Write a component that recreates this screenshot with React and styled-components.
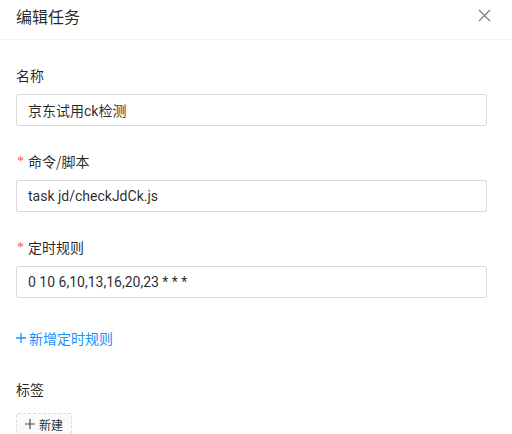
import styled, { createGlobalStyle } from "styled-components";

const GlobalStyle = createGlobalStyle`
  html, body {
    margin: 0;
    padding: 0;
    background: #fff;
  }
  body {
    font-family: Roboto, "Noto Sans CJK SC", sans-serif;
    font-size: 14px;
    color: rgba(0, 0, 0, 0.85);
  }
`;

const Drawer = styled.div`
  width: 512px;
  height: 434px;
  overflow: hidden;
  background: #fff;
`;

const Header = styled.div`
  display: flex;
  align-items: center;
  justify-content: space-between;
  height: 40px;
  padding: 0 21px 4px 16px;
  box-sizing: border-box;
  border-bottom: 1px solid #f0f0f0;
`;

const Title = styled.div`
  font-size: 16px;
  line-height: 22px;
  color: rgba(0, 0, 0, 0.85);
  font-family: "Noto Sans CJK SC", sans-serif;
  margin-top: -4px;
`;

const Close = styled.button`
  border: 0;
  background: none;
  padding: 0;
  width: 14px;
  height: 14px;
  display: flex;
  align-items: center;
  justify-content: center;
  margin-top: -4px;
  cursor: pointer;
`;

const Body = styled.div`
  padding: 24px 25px 0 16px;
`;

const Item = styled.div`
  margin-bottom: 24px;
`;

const Label = styled.div`
  display: flex;
  align-items: center;
  height: 22px;
  line-height: 22px;
  padding-bottom: 8px;
  font-family: "Noto Sans CJK SC", sans-serif;
  color: rgba(0, 0, 0, 0.85);
`;

const Star = styled.span`
  color: #ff4d4f;
  font-family: "Liberation Serif", serif;
  font-size: 14px;
  line-height: 1;
  margin: 0 4px 0 1px;
  position: relative;
  top: 1px;
`;

const Input = styled.input`
  display: block;
  width: 100%;
  height: 32px;
  box-sizing: border-box;
  padding: 4px 11px;
  border: 1px solid #d9d9d9;
  border-radius: 2px;
  font-family: Roboto, "Noto Sans CJK SC", sans-serif;
  font-size: 14px;
  color: rgba(0, 0, 0, 0.85);
  outline: none;
`;

const LinkButton = styled.button`
  display: flex;
  align-items: center;
  gap: 3px;
  height: 32px;
  padding: 0;
  border: 0;
  background: none;
  color: #1890ff;
  font-family: "Noto Sans CJK SC", sans-serif;
  font-size: 14px;
  cursor: pointer;
`;

const Control = styled.div`
  display: flex;
  align-items: center;
  min-height: 32px;
`;

const Tag = styled.span`
  display: inline-flex;
  align-items: center;
  gap: 4px;
  height: 22px;
  box-sizing: border-box;
  padding: 0 8px;
  border: 1px dashed #d9d9d9;
  border-radius: 2px;
  background: #fafafa;
  font-family: "Noto Sans CJK SC", sans-serif;
  font-size: 12px;
  color: rgba(0, 0, 0, 0.85);
`;

const Plus = ({ size, color, width = 1.2 }) => (
  <svg width={size} height={size} viewBox="0 0 10 10">
    <path d="M5 0V10M0 5H10" stroke={color} strokeWidth={width} fill="none" />
  </svg>
);

const fields = [
  { label: "名称", value: "京东试用ck检测" },
  { label: "命令/脚本", value: "task jd/checkJdCk.js", required: true },
  { label: "定时规则", value: "0 10 6,10,13,16,20,23 * * *", required: true },
];

export default function App() {
  return (
    <Drawer>
      <GlobalStyle />
      <Header>
        <Title>编辑任务</Title>
        <Close aria-label="close">
          <svg width="13" height="13" viewBox="0 0 13 13">
            <path d="M1 1L12 12M12 1L1 12" stroke="rgba(0,0,0,0.5)" strokeWidth="1.3" fill="none" />
          </svg>
        </Close>
      </Header>
      <Body>
        {fields.map((f) => (
          <Item key={f.label}>
            <Label>
              {f.required && <Star>*</Star>}
              {f.label}
            </Label>
            <Input defaultValue={f.value} />
          </Item>
        ))}
        <Item>
          <LinkButton>
            <Plus size={10} color="#1890ff" width={1.3} />
            新增定时规则
          </LinkButton>
        </Item>
        <Item>
          <Label>标签</Label>
          <Control>
            <Tag>
              <Plus size={10} color="rgba(0,0,0,0.7)" width={1.2} />
              新建
            </Tag>
          </Control>
        </Item>
      </Body>
    </Drawer>
  );
}
